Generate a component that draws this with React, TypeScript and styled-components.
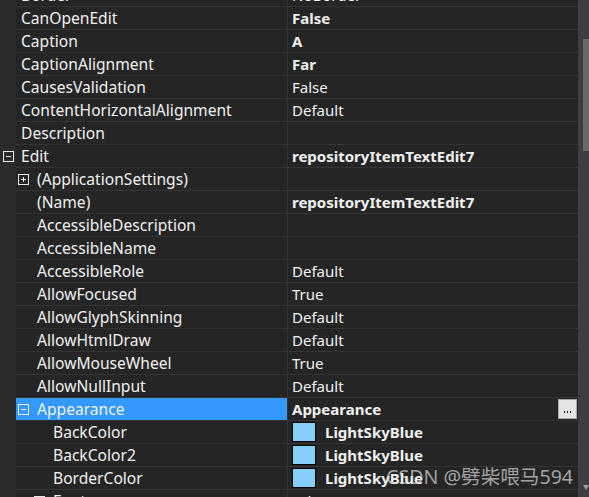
import React from "react";
import styled, { createGlobalStyle } from "styled-components";

const GlobalStyle = createGlobalStyle`
  html, body {
    margin: 0;
    padding: 0;
    background: #252526;
    overflow: hidden;
  }
  body {
    font-family: "Noto Sans", "Open Sans", sans-serif;
    font-size: 15px;
    color: #f1f1f1;
  }
`;

const Window = styled.div`
  position: relative;
  display: flex;
  width: 589px;
  height: 497px;
  overflow: hidden;
`;

const Grid = styled.div`
  flex: 1;
  display: flex;
  flex-direction: column;
  margin-top: -16px;
  background: linear-gradient(to right, #2b2b2b 16px, #252526 16px);
`;

const Row = styled.div`
  display: flex;
  height: 23px;
  flex-shrink: 0;
`;

const Gutter = styled.div`
  width: 16px;
  flex-shrink: 0;
  display: flex;
  align-items: center;
  padding-left: 2px;
  box-sizing: border-box;
  background: #2b2b2b;
`;

const Label = styled.div<{ $indent: number; $selected?: boolean }>`
  width: 272px;
  flex-shrink: 0;
  box-sizing: border-box;
  display: flex;
  align-items: center;
  padding-left: ${(p) => p.$indent}px;
  border-bottom: 1px solid #333335;
  border-right: 1px solid #333335;
  background: ${(p) => (p.$selected ? "#3399ff" : "transparent")};
  font-size: 15.6px;
  white-space: nowrap;
  line-height: 22px;
`;

const Value = styled.div<{ $bold?: boolean }>`
  flex: 1;
  display: flex;
  align-items: center;
  padding-left: 4px;
  border-bottom: 1px solid #333335;
  font-weight: ${(p) => (p.$bold ? 700 : 400)};
  white-space: nowrap;
  line-height: 22px;
`;

const ExpanderSlot = styled.span`
  width: 20px;
  flex-shrink: 0;
  display: flex;
  align-items: center;
`;

const Box = styled.span`
  position: relative;
  display: inline-block;
  width: 9px;
  height: 9px;
  border: 1px solid #e8e8e8;
  margin-left: 1px;
`;

const Bar = styled.span<{ $vertical?: boolean }>`
  position: absolute;
  background: #e8e8e8;
  left: ${(p) => (p.$vertical ? "4px" : "2px")};
  top: ${(p) => (p.$vertical ? "2px" : "4px")};
  width: ${(p) => (p.$vertical ? "1px" : "5px")};
  height: ${(p) => (p.$vertical ? "5px" : "1px")};
`;

const Swatch = styled.span<{ $color: string }>`
  width: 22px;
  height: 18px;
  margin-right: 9px;
  flex-shrink: 0;
  border: 1px solid #000;
  background: ${(p) => p.$color};
`;

const EllipsisButton = styled.span`
  margin-left: auto;
  margin-right: 1px;
  width: 19px;
  height: 20px;
  box-sizing: border-box;
  display: flex;
  align-items: flex-end;
  justify-content: center;
  gap: 2px;
  padding-bottom: 5px;
  border: 1px solid #a8a8a8;
  background: #e4e4e4;
`;

const Dot = styled.span`
  width: 1px;
  height: 2px;
  background: #1a1a1a;
`;

const Scrollbar = styled.div`
  width: 11px;
  flex-shrink: 0;
  display: flex;
  flex-direction: column;
  align-items: flex-end;
  background: #3e3e42;
`;

const Thumb = styled.div`
  margin-top: 39px;
  width: 6px;
  height: 112px;
  background: #686868;
`;

const DownArrow = styled.div`
  margin-top: auto;
  margin-bottom: 7px;
  width: 0;
  height: 0;
  border-left: 3px solid transparent;
  border-right: 3px solid transparent;
  border-top: 5px solid #9e9e9e;
`;

const Watermark = styled.div`
  position: absolute;
  left: 386px;
  top: 461px;
  font-family: "Noto Sans", "Noto Sans CJK SC", sans-serif;
  font-size: 19.6px;
  color: rgba(220, 220, 220, 0.7);
  white-space: nowrap;
`;

type Prop = {
  name: string;
  value?: string;
  bold?: boolean;
  level: number;
  expander?: "plus" | "minus";
  selected?: boolean;
  color?: string;
  button?: boolean;
};

const props: Prop[] = [
  { name: "Border", value: "NoBorder", level: 0 },
  { name: "CanOpenEdit", value: "False", bold: true, level: 0 },
  { name: "Caption", value: "A", bold: true, level: 0 },
  { name: "CaptionAlignment", value: "Far", bold: true, level: 0 },
  { name: "CausesValidation", value: "False", level: 0 },
  { name: "ContentHorizontalAlignment", value: "Default", level: 0 },
  { name: "Description", level: 0 },
  { name: "Edit", value: "repositoryItemTextEdit7", bold: true, level: 0, expander: "minus" },
  { name: "(ApplicationSettings)", level: 1, expander: "plus" },
  { name: "(Name)", value: "repositoryItemTextEdit7", bold: true, level: 1 },
  { name: "AccessibleDescription", level: 1 },
  { name: "AccessibleName", level: 1 },
  { name: "AccessibleRole", value: "Default", level: 1 },
  { name: "AllowFocused", value: "True", level: 1 },
  { name: "AllowGlyphSkinning", value: "Default", level: 1 },
  { name: "AllowHtmlDraw", value: "Default", level: 1 },
  { name: "AllowMouseWheel", value: "True", level: 1 },
  { name: "AllowNullInput", value: "Default", level: 1 },
  { name: "Appearance", value: "Appearance", bold: true, level: 1, expander: "minus", selected: true, button: true },
  { name: "BackColor", value: "LightSkyBlue", bold: true, level: 2, color: "#87cefa" },
  { name: "BackColor2", value: "LightSkyBlue", bold: true, level: 2, color: "#87cefa" },
  { name: "BorderColor", value: "LightSkyBlue", bold: true, level: 2, color: "#87cefa" },
  { name: "Font", value: "Tahoma, 8.25pt", level: 2, expander: "plus" },
];

const Expander = ({ kind }: { kind: "plus" | "minus" }) => (
  <Box>
    <Bar />
    {kind === "plus" && <Bar $vertical />}
  </Box>
);

const PropertyRow = ({ p }: { p: Prop }) => {
  // top-level rows keep their toggle in the gutter, nested ones in the label
  const nested = p.level > 0;
  const indent = nested ? 16 * (p.level - 1) + 1 : 5;
  return (
    <Row>
      <Gutter>{!nested && p.expander && <Expander kind={p.expander} />}</Gutter>
      <Label $indent={indent} $selected={p.selected}>
        {nested && <ExpanderSlot>{p.expander && <Expander kind={p.expander} />}</ExpanderSlot>}
        {p.name}
      </Label>
      <Value $bold={p.bold}>
        {p.color && <Swatch $color={p.color} />}
        {p.value}
        {p.button && (
          <EllipsisButton>
            <Dot />
            <Dot />
            <Dot />
          </EllipsisButton>
        )}
      </Value>
    </Row>
  );
};

export default function App() {
  return (
    <Window>
      <GlobalStyle />
      <Grid>
        {props.map((p) => (
          <PropertyRow key={p.name} p={p} />
        ))}
      </Grid>
      <Scrollbar>
        <Thumb />
        <DownArrow />
      </Scrollbar>
      <Watermark>CSDN @劈柴喂马594</Watermark>
    </Window>
  );
}
